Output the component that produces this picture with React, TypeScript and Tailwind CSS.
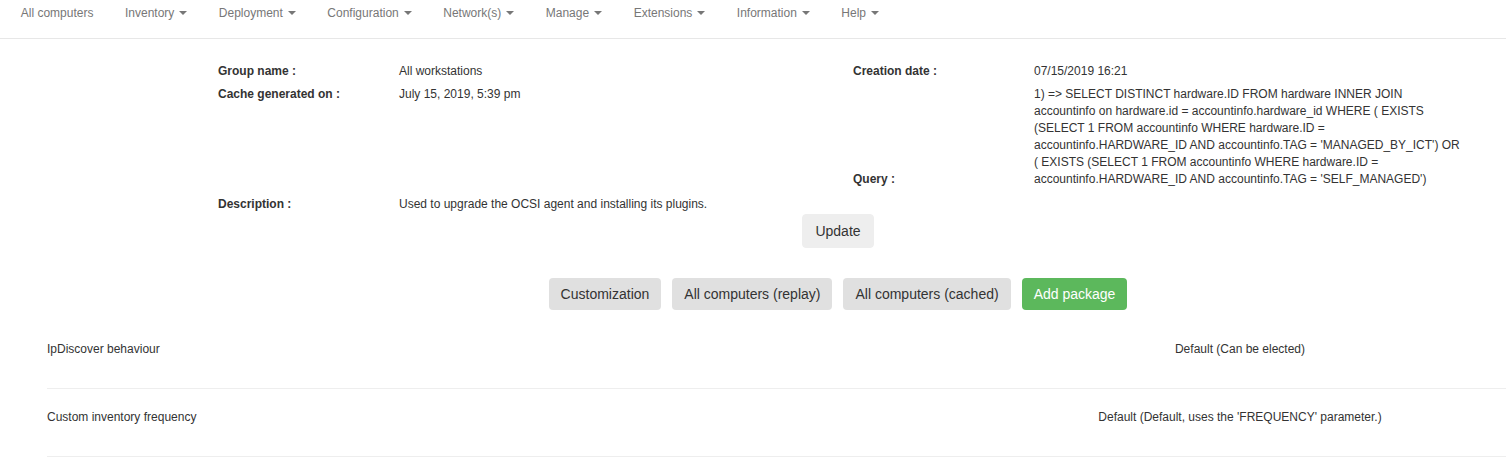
import React from "react";

const navItems = [
  { label: "All computers", caret: false },
  { label: "Inventory", caret: true },
  { label: "Deployment", caret: true },
  { label: "Configuration", caret: true },
  { label: "Network(s)", caret: true },
  { label: "Manage", caret: true },
  { label: "Extensions", caret: true },
  { label: "Information", caret: true },
  { label: "Help", caret: true },
];

const settings = [
  { name: "IpDiscover behaviour", value: "Default (Can be elected)" },
  {
    name: "Custom inventory frequency",
    value: "Default (Default, uses the 'FREQUENCY' parameter.)",
  },
];

const query =
  "1) => SELECT DISTINCT hardware.ID FROM hardware INNER JOIN accountinfo on hardware.id = accountinfo.hardware_id WHERE ( EXISTS (SELECT 1 FROM accountinfo WHERE hardware.ID = accountinfo.HARDWARE_ID AND accountinfo.TAG = 'MANAGED_BY_ICT') OR ( EXISTS (SELECT 1 FROM accountinfo WHERE hardware.ID = accountinfo.HARDWARE_ID AND accountinfo.TAG = 'SELF_MANAGED')";

function Caret() {
  return (
    <span className="ml-[5px] inline-block h-0 w-0 border-x-[4px] border-t-[4px] border-x-transparent border-t-[#777] align-middle" />
  );
}

export default function App() {
  return (
    <div className="min-h-[475px] bg-white font-['Liberation_Sans',Arial,sans-serif] text-[12px] leading-[17px] text-[#333]">
      {/* Top navigation */}
      <nav className="flex h-[39px] items-start border-b border-[#e7e7e7] pl-[5px] pt-[3px]">
        {navItems.map((item) => (
          <a
            key={item.label}
            className="flex items-center px-[15.75px] leading-[20px] text-[#777]"
          >
            {item.label}
            {item.caret && <Caret />}
          </a>
        ))}
      </nav>

      {/* Group details */}
      <div className="pt-[24px] pl-[218px]">
        <div className="grid grid-cols-[181px_454px_181px_432px] gap-y-[6px]">
          <div className="font-bold">Group name :</div>
          <div>All workstations</div>
          <div className="font-bold">Creation date :</div>
          <div>07/15/2019 16:21</div>

          <div className="font-bold">Cache generated on :</div>
          <div>July 15, 2019, 5:39 pm</div>
          <div className="self-end font-bold">Query :</div>
          <div>{query}</div>

          <div className="mt-[2px] font-bold">Description :</div>
          <div className="col-span-3 mt-[2px]">
            Used to upgrade the OCSI agent and installing its plugins.
          </div>
        </div>
      </div>

      <div className="ml-[170px]">
        <div className="mt-[1px] flex justify-center">
          <button className="rounded-[4px] border border-[#eee] bg-[#eee] px-[12px] py-[6px] text-[14px] leading-[20px] text-[#333]">
            Update
          </button>
        </div>

        <div className="mt-[30px] flex justify-center gap-[11px]">
          <button className="rounded-[4px] bg-[#e0e0e0] px-[12px] py-[6px] text-[14px] leading-[20px] text-[#333]">
            Customization
          </button>
          <button className="rounded-[4px] bg-[#e0e0e0] px-[12px] py-[6px] text-[14px] leading-[20px] text-[#333]">
            All computers (replay)
          </button>
          <button className="rounded-[4px] bg-[#e0e0e0] px-[12px] py-[6px] text-[14px] leading-[20px] text-[#333]">
            All computers (cached)
          </button>
          <button className="rounded-[4px] bg-[#5cb85c] px-[12px] py-[6px] text-[14px] leading-[20px] text-white">
            Add package
          </button>
        </div>
      </div>

      {/* Settings list */}
      <div className="mt-[11px] ml-[47px]">
        {settings.map((s) => (
          <div
            key={s.name}
            className="flex border-b border-[#eee] pt-[20px] pb-[30px]"
          >
            <div className="flex-1">{s.name}</div>
            <div className="w-[532px] text-center">{s.value}</div>
          </div>
        ))}
      </div>
    </div>
  );
}
